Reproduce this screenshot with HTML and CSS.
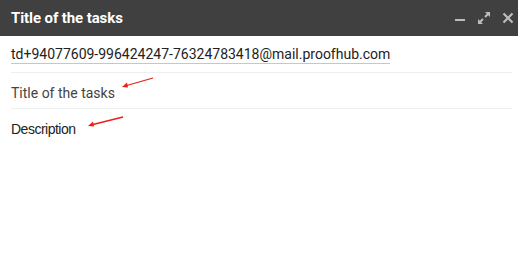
FILE: index.html
```html
<!DOCTYPE html>
<html>
<head>
<meta charset="utf-8">
<link rel="stylesheet" href="styles.css">
</head>
<body>
<div class="compose">
  <header class="bar">
    <span class="bar-title">Title of the tasks</span>
    <div class="bar-icons">
      <svg class="ic" width="14" height="14" viewBox="0 0 14 14"><rect x="2" y="8" width="10" height="2" fill="#bdbdbd"/></svg>
      <svg class="ic" width="14" height="14" viewBox="0 0 14 14"><path d="M8 1h5v5l-1.8-1.8-2.5 2.5-1.4-1.4 2.5-2.5z M6 13H1V8l1.8 1.8 2.5-2.5 1.4 1.4-2.5 2.5z" fill="#bdbdbd"/></svg>
      <svg class="ic" width="14" height="14" viewBox="0 0 14 14"><path d="M2.5 2.5l9 9M11.5 2.5l-9 9" stroke="#bdbdbd" stroke-width="2.2"/></svg>
    </div>
  </header>
  <div class="row to"><span class="addr">td+94077609-996424247-76324783418@mail.proofhub.com</span></div>
  <div class="row"><span class="field">Title of the tasks</span>
    <svg class="arrow a1" width="34" height="12" viewBox="0 0 34 12"><path d="M32 1L4 9" stroke="#e8201a" stroke-width="1.3"/><path d="M1 10L6 5.5 7 10.5z" fill="#e8201a"/></svg>
  </div>
  <div class="row last"><span class="body-text">Description</span>
    <svg class="arrow a2" width="38" height="12" viewBox="0 0 38 12"><path d="M36 1L4 9" stroke="#e8201a" stroke-width="1.3"/><path d="M1 10L6 5.5 7 10.5z" fill="#e8201a"/></svg>
  </div>
</div>
</body>
</html>
```

FILE: styles.css
```css
html, body { margin: 0; padding: 0; background: #fff; }
body { font-family: Roboto, "Noto Sans", sans-serif; width: 518px; height: 264px; overflow: hidden; }
.compose { display: flex; flex-direction: column; }
.bar { height: 36px; background: #404040; display: flex; align-items: center; justify-content: space-between; padding: 0 3px 0 11px; }
.bar-title { color: #fff; font-weight: 700; font-size: 15px; letter-spacing: -0.1px; }
.bar-icons { display: flex; align-items: center; gap: 10px; }
.ic { display: block; }
.row { margin-left: 11px; margin-right: 6px; border-bottom: 1px solid #eceff1; height: 35px; display: flex; align-items: center; position: relative; font-size: 14px; color: #222; }
.row.last { border-bottom: none; }
.to { height: 36px; }
.addr { border-bottom: 1px solid #f0c46b; line-height: 18px; padding-top: 1px; }
.field { color: #444; font-size: 14px; padding-top: 4px; }
.body-text { font-family: "Liberation Sans", Arial, sans-serif; font-size: 14px; letter-spacing: -0.5px; color: #222; padding-top: 4px; }
.arrow { position: absolute; }
.a1 { left: 110px; top: 4px; }
.a2 { left: 76px; top: 7px; }
```
